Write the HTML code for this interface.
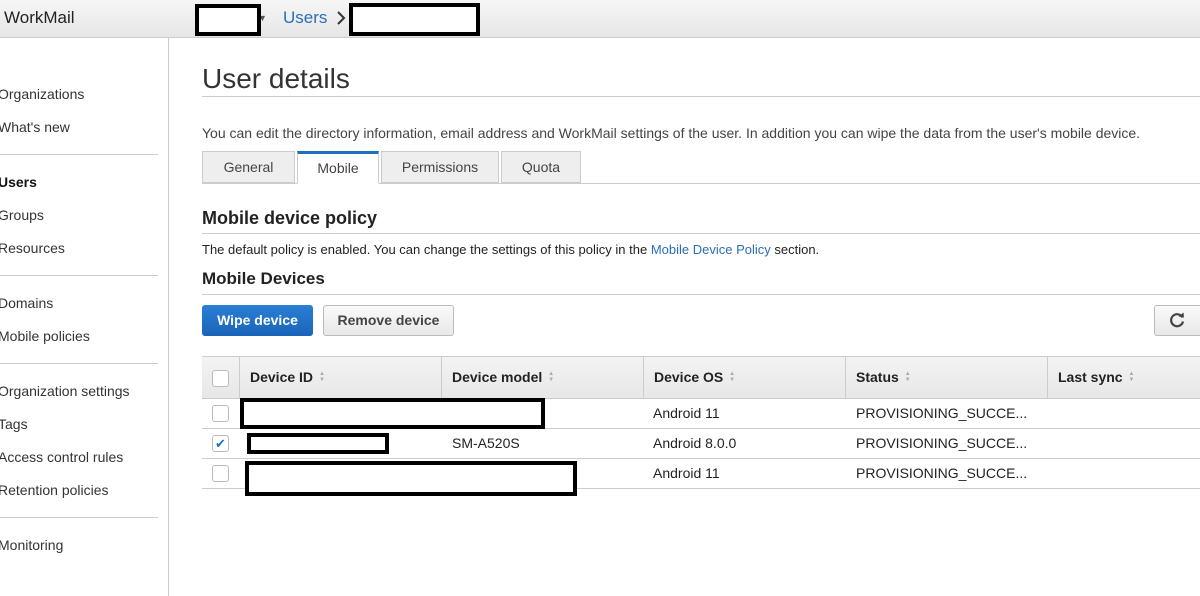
<!DOCTYPE html><html><head><style>
body{margin:0;width:1200px;height:596px;overflow:hidden;background:#fff;font-family:"Liberation Sans",Arial,sans-serif;color:#222;position:relative}
.a{position:absolute}
.nav{position:absolute;left:-2px;font-size:14px;color:#333}
.sep{position:absolute;left:0;width:158px;height:1px;background:#ccc}
.hl{position:absolute;left:202px;right:0;height:1px;background:#ccc}
.tab{position:absolute;top:151px;height:32px;border:1px solid #ccc;background:#eee;font-size:14px;color:#444;text-align:center;line-height:31px;box-sizing:border-box}
.th{position:absolute;top:357px;height:41px;border-left:1px solid #ccc;font-size:14px;font-weight:bold;line-height:41px;padding-left:10px;box-sizing:border-box;color:#222}
.ar{display:inline-block;vertical-align:middle;color:#aaa;font-size:6px;line-height:6px;font-weight:normal;margin-left:2px;margin-top:-2px}
.cb{position:absolute;left:212px;width:15px;height:15px;border:1px solid #bbb;border-radius:3px;background:#fff}
.rl{position:absolute;left:202px;right:0;height:1px;background:#ccc}
.td{position:absolute;font-size:14px;color:#222}
.bx{position:absolute;border:4px solid #000;background:#fff;box-sizing:border-box}
</style></head><body>
<div class="a" style="left:0;top:0;width:1200px;height:37px;background:linear-gradient(#f6f6f6,#e6e6e6);border-bottom:1px solid #ccc"></div>
<div class="a" style="left:4px;top:8px;font-size:17px;color:#222">WorkMail</div>
<div class="a" style="left:258px;top:13px;font-size:9px;color:#555">▼</div>
<div class="bx" style="left:195px;top:4px;width:66px;height:32px"></div>
<div class="a" style="left:283px;top:8px;font-size:17px;color:#2a6ebb">Users</div>
<svg class="a" style="left:336px;top:11px" width="10" height="14"><path d="M2 1 L8 7 L2 13" stroke="#333" stroke-width="2" fill="none"/></svg>
<div class="bx" style="left:349px;top:3px;width:131px;height:33px"></div>
<div class="a" style="left:168px;top:38px;width:1px;height:558px;background:#ccc"></div>
<div class="nav" style="top:86px">Organizations</div>
<div class="nav" style="top:119px">What's new</div>
<div class="sep" style="top:154px"></div>
<div class="nav" style="top:174px;font-weight:bold;color:#111">Users</div>
<div class="nav" style="top:207px">Groups</div>
<div class="nav" style="top:240px">Resources</div>
<div class="sep" style="top:275px"></div>
<div class="nav" style="top:295px">Domains</div>
<div class="nav" style="top:328px">Mobile policies</div>
<div class="sep" style="top:363px"></div>
<div class="nav" style="top:383px">Organization settings</div>
<div class="nav" style="top:416px">Tags</div>
<div class="nav" style="top:449px">Access control rules</div>
<div class="nav" style="top:482px">Retention policies</div>
<div class="sep" style="top:517px"></div>
<div class="nav" style="top:537px">Monitoring</div>

<div class="a" style="left:202px;top:63px;font-size:28px;color:#333">User details</div>
<div class="hl" style="top:96px"></div>
<div class="a" style="left:202px;top:125px;font-size:14px;color:#444">You can edit the directory information, email address and WorkMail settings of the user. In addition you can wipe the data from the user's mobile device.</div>
<div class="hl" style="top:183px"></div>
<div class="tab" style="left:202px;width:93px">General</div>
<div class="tab" style="left:297px;width:82px;background:#fff;border-top:3px solid #1f6fbf;border-bottom:1px solid #fff;height:33px;line-height:28px">Mobile</div>
<div class="tab" style="left:381px;width:118px">Permissions</div>
<div class="tab" style="left:501px;width:80px">Quota</div>
<div class="a" style="left:202px;top:208px;font-size:18px;font-weight:bold;color:#222">Mobile device policy</div>
<div class="hl" style="top:233px"></div>
<div class="a" style="left:202px;top:242px;font-size:13px;color:#222">The default policy is enabled. You can change the settings of this policy in the <span style="color:#2a6ebb">Mobile Device Policy</span> section.</div>
<div class="a" style="left:202px;top:269px;font-size:17px;font-weight:bold;color:#222">Mobile Devices</div>
<div class="hl" style="top:294px"></div>
<div class="a" style="left:202px;top:305px;width:111px;height:31px;border-radius:3px;background:linear-gradient(#2a7fd4,#1a64b8);color:#fff;font-weight:bold;font-size:14px;text-align:center;line-height:31px">Wipe device</div>
<div class="a" style="left:323px;top:305px;width:131px;height:31px;border:1px solid #bbb;box-sizing:border-box;border-radius:3px;background:linear-gradient(#fafafa,#e8e8e8);color:#444;font-weight:bold;font-size:14px;text-align:center;line-height:29px">Remove device</div>
<div class="a" style="left:1154px;top:305px;width:50px;height:31px;border:1px solid #bbb;box-sizing:border-box;border-radius:3px;background:linear-gradient(#fafafa,#e8e8e8)"></div>
<svg class="a" style="left:1168px;top:311px" width="18" height="18" viewBox="0 0 18 18"><path d="M14.5 6.5 A6 6 0 1 0 15 10.5" stroke="#444" stroke-width="2.2" fill="none"/><path d="M10.5 5.5 L16 6.5 L15.5 1.5 Z" fill="#444"/></svg>

<div class="a" style="left:202px;top:356px;width:998px;height:42px;background:linear-gradient(#f3f3f3,#e7e7e7);border-top:1px solid #ccc"></div>
<div class="cb" style="top:370px"></div>
<div class="th" style="left:239px">Device ID <span class="ar">▲<br>▼</span></div>
<div class="th" style="left:441px">Device model <span class="ar">▲<br>▼</span></div>
<div class="th" style="left:643px">Device OS <span class="ar">▲<br>▼</span></div>
<div class="th" style="left:845px">Status <span class="ar">▲<br>▼</span></div>
<div class="th" style="left:1047px">Last sync <span class="ar">▲<br>▼</span></div>
<div class="rl" style="top:398px"></div><div class="rl" style="top:428px"></div><div class="rl" style="top:458px"></div><div class="rl" style="top:488px"></div>
<div class="cb" style="top:405px"></div>
<div class="cb" style="top:435px;color:#1f6fbf;font-size:13px;line-height:15px;text-align:center">✔</div>
<div class="cb" style="top:465px"></div>
<div class="td" style="left:452px;top:435px">SM-A520S</div>
<div class="td" style="left:653px;top:405px">Android 11</div>
<div class="td" style="left:653px;top:435px">Android 8.0.0</div>
<div class="td" style="left:653px;top:465px">Android 11</div>
<div class="td" style="left:856px;top:405px">PROVISIONING_SUCCE...</div>
<div class="td" style="left:856px;top:435px">PROVISIONING_SUCCE...</div>
<div class="td" style="left:856px;top:465px">PROVISIONING_SUCCE...</div>
<div class="bx" style="left:240px;top:398px;width:305px;height:31px"></div>
<div class="bx" style="left:247px;top:433px;width:142px;height:21px"></div>
<div class="bx" style="left:245px;top:461px;width:332px;height:35px"></div>
</body></html>
